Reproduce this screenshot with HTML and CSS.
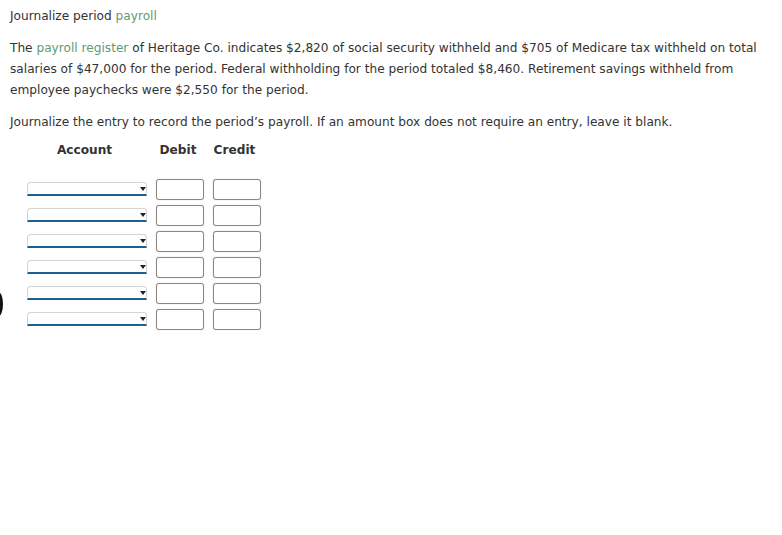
FILE: index.html
```html
<!DOCTYPE html>
<html>
<head>
<meta charset="utf-8">
<link rel="stylesheet" href="styles.css">
</head>
<body>
<div class="page">
  <div class="title">Journalize period <span class="link">payroll</span></div>
  <p class="para">The <span class="link">payroll register</span> of Heritage Co. indicates $2,820 of social security withheld and $705 of Medicare tax withheld on total salaries of $47,000 for the period. Federal withholding for the period totaled $8,460. Retirement savings withheld from employee paychecks were $2,550 for the period.</p>
  <p class="instr">Journalize the entry to record the period’s payroll. If an amount box does not require an entry, leave it blank.</p>
  <div class="table">
    <div class="head">
      <div class="h-account">Account</div>
      <div class="h-debit">Debit</div>
      <div class="h-credit">Credit</div>
    </div>
    <div class="rows">
      <div class="row"><div class="select"><span class="arrow"></span></div><div class="amt"></div><div class="amt"></div></div>
      <div class="row"><div class="select"><span class="arrow"></span></div><div class="amt"></div><div class="amt"></div></div>
      <div class="row"><div class="select"><span class="arrow"></span></div><div class="amt"></div><div class="amt"></div></div>
      <div class="row"><div class="select"><span class="arrow"></span></div><div class="amt"></div><div class="amt"></div></div>
      <div class="row"><div class="select"><span class="arrow"></span></div><div class="amt"></div><div class="amt"></div></div>
      <div class="row"><div class="select"><span class="arrow"></span></div><div class="amt"></div><div class="amt"></div></div>
    </div>
  </div>
  <div class="edge"></div>
</div>
</body>
</html>
```
FILE: styles.css
```css
html, body {
  margin: 0;
  padding: 0;
  background: #fff;
}
.page {
  position: relative;
  width: 764px;
  height: 535px;
  padding: 0 0 0 10px;
  box-sizing: border-box;
  font-family: "DejaVu Sans", Verdana, sans-serif;
  font-size: 12.15px;
  color: #333;
}
.title {
  padding-top: 8px;
  line-height: 16px;
}
.link {
  color: #5f9b75;
}
.para {
  margin: 14px 0 0 0;
  line-height: 21px;
}
.instr {
  margin: 11px 0 0 0;
  line-height: 21px;
}
.head {
  display: flex;
  margin-top: 9px;
  font-weight: bold;
  line-height: 16px;
}
.h-account {
  width: 149px;
  text-align: center;
}
.h-debit {
  width: 38px;
  text-align: center;
}
.h-credit {
  width: 75px;
  text-align: center;
}
.rows {
  margin-top: 21px;
  display: flex;
  flex-direction: column;
  gap: 5px;
}
.row {
  display: flex;
  align-items: flex-start;
  height: 21px;
}
.select {
  position: relative;
  margin: 3px 0 0 17px;
  width: 118px;
  height: 11px;
  border: 1px solid #d4d4d4;
  border-bottom: 2px solid #1d5f8e;
  border-radius: 4px 4px 0 0;
  background: #fff;
}
.arrow {
  position: absolute;
  right: 0;
  top: 4px;
  width: 0;
  height: 0;
  border-left: 3.5px solid transparent;
  border-right: 3.5px solid transparent;
  border-top: 4px solid #222;
}
.amt {
  width: 46px;
  height: 19px;
  border: 1px solid #888;
  border-radius: 3px;
  box-shadow: 0 0 1px #aaa;
  margin-left: 9px;
  background: #fff;
}
.edge {
  position: absolute;
  left: -6px;
  top: 292px;
  width: 9px;
  height: 24px;
  border-radius: 50%;
  background: #111;
}
```
